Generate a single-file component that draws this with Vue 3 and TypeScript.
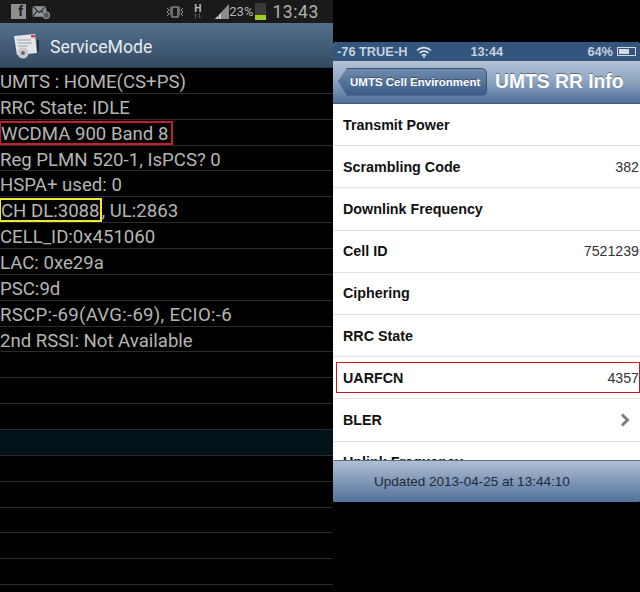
<script setup lang="ts">
interface Row { label: string; value?: string; chevron?: boolean; hl?: boolean }
const leftRows = [
  'UMTS : HOME(CS+PS)',
  'RRC State: IDLE',
  'WCDMA 900 Band 8',
  'Reg PLMN 520-1, IsPCS? 0',
  'HSPA+ used: 0',
  'CH DL:3088, UL:2863',
  'CELL_ID:0x451060',
  'LAC: 0xe29a',
  'PSC:9d',
  'RSCP:-69(AVG:-69), ECIO:-6',
  '2nd RSSI: Not Available',
  '', '', '', '', '', '', '', '', '', ''
]
const rightRows: Row[] = [
  { label: 'Transmit Power' },
  { label: 'Scrambling Code', value: '382' },
  { label: 'Downlink Frequency' },
  { label: 'Cell ID', value: '7521239' },
  { label: 'Ciphering' },
  { label: 'RRC State' },
  { label: 'UARFCN', value: '4357', hl: true },
  { label: 'BLER', chevron: true },
  { label: 'Uplink Frequency' }
]
</script>

<template>
  <div class="page">
    <section class="android">
      <header class="status">
        <div class="status-left">
          <span class="fb">f</span>
          <svg width="18" height="14" viewBox="0 0 17 13">
            <rect x="0.5" y="1" width="13" height="10" fill="#8d9296" />
            <path d="M0.5 1 L7 7 L13.5 1 M0.5 11 L5 5.5 M13.5 11 L9 5.5" fill="none" stroke="#222" stroke-width="1" />
            <circle cx="13.5" cy="9.5" r="3" fill="#555" stroke="#999" stroke-width="1" />
          </svg>
        </div>
        <div class="status-right">
          <svg class="vib" width="18" height="14" viewBox="0 0 18 14">
            <rect x="6" y="2" width="6" height="10" fill="none" stroke="#8a8a8a" stroke-width="1.4" />
            <path d="M1 3 L3 5 L1 7 L3 9 L1 11 M4 2 L5 4 L4 6 L5 8 L4 10 M17 3 L15 5 L17 7 L15 9 L17 11 M14 2 L13 4 L14 6 L13 8 L14 10" fill="none" stroke="#8a8a8a" stroke-width="1" />
          </svg>
          <div class="hsdpa"><b>H</b><svg width="9" height="6" viewBox="0 0 9 6"><path d="M2.5 6V1M1 2.5L2.5 1L4 2.5M6.5 0V5M5 3.5L6.5 5L8 3.5" fill="none" stroke="#555" stroke-width="1" /></svg></div>
          <svg class="sig" width="14" height="15" viewBox="0 0 14 15"><path d="M0 15 L14 0 V15 Z" fill="#8c8c8c" /><path d="M0 15 L3 12 V15 Z M4 15 V11 L6 9 V15 Z" fill="#ccc" /></svg>
          <span class="pct">23%</span>
          <div class="batt"><i></i></div>
          <span class="clock">13:43</span>
        </div>
      </header>
      <div class="action">
        <svg width="26" height="28" viewBox="0 0 26 28">
          <path d="M1 3 L22 1 L24 20 L4 22 Z" fill="#e4e6e8" />
          <rect x="18" y="2" width="4" height="2.5" fill="#c44" />
          <path d="M4 7 H18 M4.500 10 H19 M5 13 H15" stroke="#9aa0a6" stroke-width="1" />
          <circle cx="10" cy="20" r="5.500" fill="#c8cbce" />
          <circle cx="10" cy="20" r="2" fill="#667" />
          <path d="M24 6 L26 8 V18 L24 20 Z" fill="#22303f" />
        </svg>
        <span>ServiceMode</span>
      </div>
      <ul class="log">
        <li v-for="(row, i) in leftRows" :key="i" :class="{ band: i === 14, wide: i === 9 }">
          <template v-if="i === 2"><span class="box red">{{ row }}</span></template>
          <template v-else-if="i === 5"><span class="box yellow">CH DL:3088</span>, UL:2863</template>
          <template v-else>{{ row }}</template>
        </li>
      </ul>
    </section>

    <section class="phone">
      <div class="ios-status">
        <span class="carrier">-76 TRUE-H</span>
        <svg width="16" height="12" viewBox="0 0 16 12">
          <path d="M1 4.500 A10 10 0 0 1 15 4.500 M3.500 7 A6.500 6.500 0 0 1 12.500 7 M6 9.500 A3 3 0 0 1 10 9.500" fill="none" stroke="#d4dce6" stroke-width="1.700" />
          <circle cx="8" cy="11" r="1" fill="#d4dce6" />
        </svg>
        <span class="ios-time">13:44</span>
        <span class="ios-batt">64%</span>
        <div class="ios-batt-icon"><i></i></div>
      </div>
      <nav class="nav">
        <div class="back">UMTS Cell Environment</div>
        <h1>UMTS RR Info</h1>
      </nav>
      <ul class="table">
        <li v-for="row in rightRows" :key="row.label" :class="{ hl: row.hl }">
          <span class="label">{{ row.label }}</span>
          <span v-if="row.value" class="value">{{ row.value }}</span>
          <svg v-if="row.chevron" class="chev" width="10" height="14" viewBox="0 0 10 14"><path d="M2 1.500 L7.500 7 L2 12.500" fill="none" stroke="#7f7f7f" stroke-width="3" /></svg>
        </li>
      </ul>
      <footer class="toolbar">Updated 2013-04-25 at 13:44:10</footer>
    </section>
  </div>
</template>

<style>
html, body { margin: 0; background: #000; }
</style>

<style scoped>
.page {
  width: 640px;
  height: 592px;
  display: flex;
  overflow: hidden;
  background: #000;
}
.android {
  width: 333px;
  flex: none;
  overflow: hidden;
  display: flex;
  flex-direction: column;
}
.status {
  height: 23px;
  flex: none;
  background: #1a1a1a;
  display: flex;
  justify-content: space-between;
  align-items: center;
  padding: 0 14px 0 11px;
}
.status-left { display: flex; align-items: center; gap: 6px; }
.fb {
  width: 15px;
  height: 15px;
  background: #8d8f91;
  color: #1a1a1a;
  font: bold 14px/15px "Liberation Sans", sans-serif;
  text-align: right;
  padding-right: 3px;
  box-sizing: border-box;
}
.status-right { display: flex; align-items: center; }
.vib { margin-right: 9px; }
.hsdpa { display: flex; flex-direction: column; align-items: center; width: 9px; margin-right: 13px; }
.hsdpa b { font: bold 10px/9px "Liberation Sans", sans-serif; color: #bbb; }
.pct { font: 13px "Roboto", sans-serif; color: #b4b4b4; margin: 0 2px 0 0; }
.batt {
  width: 11px;
  height: 17px;
  background: #3a3a3a;
  display: flex;
  align-items: flex-end;
}
.batt i { display: block; width: 100%; height: 5px; background: #9fd01e; }
.clock { font: 17.500px "Roboto", sans-serif; color: #b0b0b0; margin-left: 6px; letter-spacing: 0.6px; }
.action {
  height: 45px;
  flex: none;
  box-sizing: border-box;
  background: linear-gradient(#54708e, #334a60);
  display: flex;
  align-items: center;
  padding: 3px 0 0 13px;
  gap: 11px;
  color: #e6ebef;
  font: 17.700px "Roboto", sans-serif;
  border-bottom: 1px solid #2a3a48;
}
.log {
  list-style: none;
  margin: 0;
  padding: 0;
}
.log li {
  height: 25.870px;
  box-sizing: border-box;
  border-bottom: 1px solid #2c2c2c;
  color: #b5b5b5;
  font: 18.600px/28px "Roboto", sans-serif;
  padding-left: 0;
  white-space: pre;
}
.log li.band { background: #02141a; }
.log li.wide { letter-spacing: 0.27px; }
.box {
  display: inline-block;
  height: 24px;
  line-height: 23px;
  box-sizing: border-box;
  padding-left: 0;
  vertical-align: top;
  margin-top: 1px;
}
.box.red { border: 2px solid #c21f2b; border-left-width: 1px; padding-right: 3px; }
.box.yellow { border: 2px solid #efe82e; border-left-width: 1px; padding-right: 0; }

.phone {
  flex: 1;
  height: 460px;
  margin-top: 42px;
  border-radius: 4px 4px 3px 3px;
  overflow: hidden;
  display: flex;
  flex-direction: column;
  background: #fff;
}
.ios-status {
  height: 19px;
  flex: none;
  background: #34557e;
  color: #c6d1de;
  font: bold 12.800px/19px "Liberation Sans", sans-serif;
  display: flex;
  align-items: center;
  padding: 0 4px 0 4px;
}
.carrier { margin-right: 9px; }
.ios-time { margin-left: 38px; }
.ios-batt { margin-left: auto; margin-right: 4px; }
.ios-batt-icon {
  width: 19px;
  height: 9px;
  box-sizing: border-box;
  border: 1px solid #d4dce6;
  padding: 1px;
}
.ios-batt-icon i { display: block; width: 64%; height: 100%; background: #d4dce6; }
.nav {
  height: 43px;
  flex: none;
  box-sizing: border-box;
  background: linear-gradient(#b4c4d8, #8ba2bf 50%, #4f6f98);
  border-bottom: 1px solid #3f5a7c;
  display: flex;
  align-items: center;
  padding-left: 5px;
}
.back {
  height: 28px;
  width: 149px;
  flex: none;
  box-sizing: border-box;
  margin-top: -1px;
  background: linear-gradient(#6f8bae, #3a5c88);
  border: 1px solid #3b5475;
  border-radius: 5px;
  clip-path: polygon(0 50%, 9px 0, 100% 0, 100% 100%, 9px 100%);
  color: #fff;
  font: bold 11.500px/26px "Liberation Sans", sans-serif;
  padding-left: 11px;
  white-space: nowrap;
  text-shadow: 0 -1px 0 rgba(0, 0, 0, 0.4);
}
.nav h1 {
  margin: -1px 0 0 8px;
  color: #fff;
  font: bold 19.300px "Liberation Sans", sans-serif;
  white-space: nowrap;
  text-shadow: 0 -1px 0 rgba(0, 0, 0, 0.4);
}
.table {
  list-style: none;
  margin: 0;
  padding: 0;
  flex: 1;
  min-height: 0;
  overflow: hidden;
}
.table li {
  position: relative;
  height: 42.200px;
  box-sizing: border-box;
  border-bottom: 1px solid #e0e0e0;
  display: flex;
  align-items: center;
  justify-content: space-between;
  padding: 0 1px 0 10px;
  color: #111;
}
.label { font: bold 14.300px "Liberation Sans", sans-serif; }
.value { font: 14.200px "Liberation Sans", sans-serif; color: #333; }
.chev { margin-right: 9px; }
.table li.hl::after {
  content: "";
  position: absolute;
  left: 3px;
  right: 0;
  top: 5px;
  bottom: 5px;
  border: 1.500px solid #c8161f;
}
.toolbar {
  height: 42px;
  flex: none;
  box-sizing: border-box;
  background: linear-gradient(#afbfd3, #50709a);
  border-top: 1px solid #5a6f8a;
  color: #1f2a38;
  font: 13.550px/41px "Liberation Sans", sans-serif;
  padding-left: 41px;
}
</style>
